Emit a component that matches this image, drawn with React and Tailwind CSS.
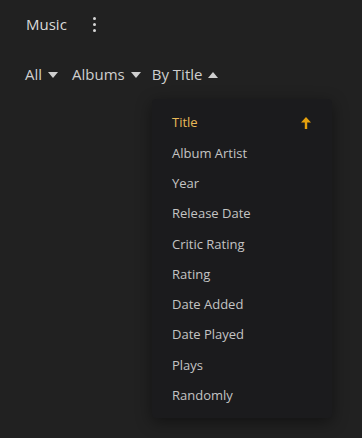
const sortOptions = [
  "Title",
  "Album Artist",
  "Year",
  "Release Date",
  "Critic Rating",
  "Rating",
  "Date Added",
  "Date Played",
  "Plays",
  "Randomly",
];

const Caret = ({ up = false }) => (
  <svg width="10" height="6" viewBox="0 0 10 6" className="ml-[6px] mt-[1px]">
    {up ? <path d="M0 6 L5 0 L10 6 Z" fill="currentColor" /> : <path d="M0 0 L10 0 L5 6 Z" fill="currentColor" />}
  </svg>
);

export default function App() {
  const selected = "Title";

  return (
    <div
      className="w-[362px] h-[438px] bg-[#212121] text-[#d6d6d6] relative overflow-hidden"
      style={{ fontFamily: '"Open Sans", "Noto Sans", sans-serif' }}
    >
      {/* header */}
      <div className="flex items-center h-[24px] mt-[12px] pl-[26px]">
        <span className="text-[15px] text-[#dadada]">Music</span>
        <div className="ml-[26px] flex flex-col gap-[3px] items-center">
          <span className="w-[3px] h-[3px] bg-[#d6d6d6] rounded-full" />
          <span className="w-[3px] h-[3px] bg-[#d6d6d6] rounded-full" />
          <span className="w-[3px] h-[3px] bg-[#d6d6d6] rounded-full" />
        </div>
      </div>

      {/* filter row */}
      <div className="flex items-center mt-[26px] pl-[25px] h-[24px] text-[15px] text-[#cfcfcf]">
        <button className="flex items-center">
          All
          <Caret />
        </button>
        <button className="flex items-center ml-[14px]">
          Albums
          <Caret />
        </button>
        <button className="flex items-center ml-[11px]">
          By Title
          <Caret up />
        </button>
      </div>

      {/* sort dropdown */}
      <div className="absolute left-[152px] top-[99px] w-[180px] bg-[#1b1b1d] rounded-[4px] shadow-[0_4px_16px_rgba(0,0,0,0.45)] pt-[9px] pb-[7px]">
        {sortOptions.map((opt) => (
          <div
            key={opt}
            className={`flex items-center justify-between h-[30.3px] pl-[20px] pr-[21px] text-[13px] ${
              opt === selected ? "text-[#e8b958]" : "text-[#c4c4c4]"
            }`}
          >
            <span>{opt}</span>
            {opt === selected && (
              <svg width="10" height="12" viewBox="0 0 10 12" className="text-[#e5a00d]">
                <path d="M5 0 L10 5.5 L6.2 5.5 L6.2 12 L3.8 12 L3.8 5.5 L0 5.5 Z" fill="currentColor" />
              </svg>
            )}
          </div>
        ))}
      </div>
    </div>
  );
}
